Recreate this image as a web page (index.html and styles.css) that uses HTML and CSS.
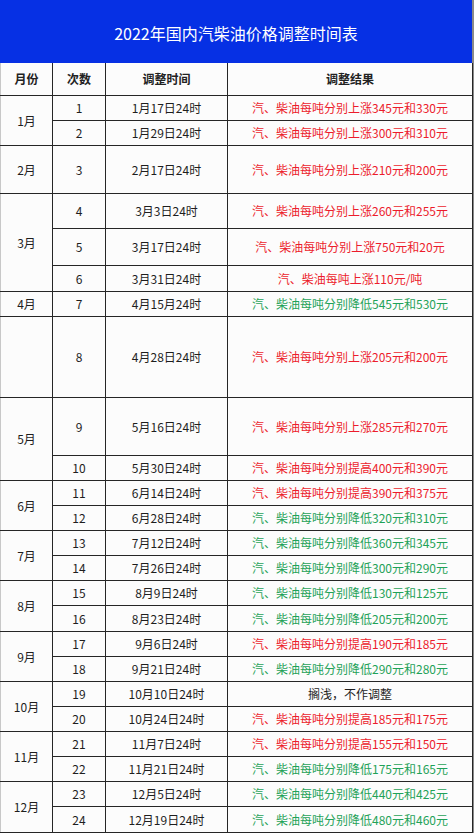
FILE: index.html
```html
<!DOCTYPE html>
<html lang="zh-CN">
<head>
<meta charset="utf-8">
<title>2022年国内汽柴油价格调整时间表</title>
<link rel="stylesheet" href="styles.css">
</head>
<body>
<div class="page">
  <div class="title">2022年国内汽柴油价格调整时间表</div>
  <table class="sheet">
    <colgroup>
      <col class="c-month">
      <col class="c-no">
      <col class="c-time">
      <col class="c-result">
    </colgroup>
    <thead>
      <tr class="h33"><th>月份</th><th>次数</th><th>调整时间</th><th>调整结果</th></tr>
    </thead>
    <tbody>
      <tr><td rowspan="2">1月</td><td>1</td><td>1月17日24时</td><td class="up">汽、柴油每吨分别上涨345元和330元</td></tr>
      <tr><td>2</td><td>1月29日24时</td><td class="up">汽、柴油每吨分别上涨300元和310元</td></tr>
      <tr class="h48"><td>2月</td><td>3</td><td>2月17日24时</td><td class="up">汽、柴油每吨分别上涨210元和200元</td></tr>
      <tr class="h35"><td rowspan="3">3月</td><td>4</td><td>3月3日24时</td><td class="up">汽、柴油每吨分别上涨260元和255元</td></tr>
      <tr class="h37"><td>5</td><td>3月17日24时</td><td class="up">汽、柴油每吨分别上涨750元和20元</td></tr>
      <tr class="h26"><td>6</td><td>3月31日24时</td><td class="up">汽、柴油每吨上涨110元/吨</td></tr>
      <tr><td>4月</td><td>7</td><td>4月15月24时</td><td class="down">汽、柴油每吨分别降低545元和530元</td></tr>
      <tr class="h81"><td></td><td>8</td><td>4月28日24时</td><td class="up">汽、柴油每吨分别上涨205元和200元</td></tr>
      <tr class="h58"><td rowspan="2">5月</td><td>9</td><td>5月16日24时</td><td class="up">汽、柴油每吨分别上涨285元和270元</td></tr>
      <tr><td>10</td><td>5月30日24时</td><td class="up">汽、柴油每吨分别提高400元和390元</td></tr>
      <tr><td rowspan="2">6月</td><td>11</td><td>6月14日24时</td><td class="up">汽、柴油每吨分别提高390元和375元</td></tr>
      <tr><td>12</td><td>6月28日24时</td><td class="down">汽、柴油每吨分别降低320元和310元</td></tr>
      <tr><td rowspan="2">7月</td><td>13</td><td>7月12日24时</td><td class="down">汽、柴油每吨分别降低360元和345元</td></tr>
      <tr><td>14</td><td>7月26日24时</td><td class="down">汽、柴油每吨分别降低300元和290元</td></tr>
      <tr><td rowspan="2">8月</td><td>15</td><td>8月9日24时</td><td class="down">汽、柴油每吨分别降低130元和125元</td></tr>
      <tr class="h26"><td>16</td><td>8月23日24时</td><td class="down">汽、柴油每吨分别降低205元和200元</td></tr>
      <tr><td rowspan="2">9月</td><td>17</td><td>9月6日24时</td><td class="up">汽、柴油每吨分别提高190元和185元</td></tr>
      <tr><td>18</td><td>9月21日24时</td><td class="down">汽、柴油每吨分别降低290元和280元</td></tr>
      <tr><td rowspan="2">10月</td><td>19</td><td>10月10日24时</td><td>搁浅，不作调整</td></tr>
      <tr><td>20</td><td>10月24日24时</td><td class="up">汽、柴油每吨分别提高185元和175元</td></tr>
      <tr><td rowspan="2">11月</td><td>21</td><td>11月7日24时</td><td class="up">汽、柴油每吨分别提高155元和150元</td></tr>
      <tr><td>22</td><td>11月21日24时</td><td class="down">汽、柴油每吨分别降低175元和165元</td></tr>
      <tr><td rowspan="2">12月</td><td>23</td><td>12月5日24时</td><td class="down">汽、柴油每吨分别降低440元和425元</td></tr>
      <tr class="h26"><td>24</td><td>12月19日24时</td><td class="down">汽、柴油每吨分别降低480元和460元</td></tr>
    </tbody>
  </table>
</div>
</body>
</html>
```

FILE: styles.css
```css
html, body {
  margin: 0;
  padding: 0;
  background: #ffffff;
}

body {
  font-family: "Noto Sans CJK SC", "Noto Sans", "Liberation Sans", sans-serif;
  color: #1e1e1e;
  width: 474px;
  height: 833px;
  overflow: hidden;
}

.page {
  width: 472px;
  border-right: 2px solid #8a8a8a;
}

.title {
  height: 63px;
  background: #0630e4;
  color: #ffffff;
  font-size: 16px;
  display: flex;
  align-items: center;
  justify-content: center;
  padding-top: 2px;
  box-sizing: border-box;
}

.sheet {
  width: 472px;
  table-layout: fixed;
  border-collapse: collapse;
  background: #fcfcfc;
}

.c-month { width: 52px; }
.c-no { width: 53px; }
.c-time { width: 122px; }
.c-result { width: 245px; }

.sheet th,
.sheet td {
  border: 1px solid #262626;
  padding: 0;
  height: 24px;
  text-align: center;
  vertical-align: middle;
  font-size: 12px;
  line-height: 14px;
  white-space: nowrap;
  overflow: hidden;
}

.sheet tr > :first-child {
  border-left-color: #c8c8c8;
}

.sheet th {
  font-weight: 700;
  font-size: 12px;
  color: #222;
}

.sheet tr:first-child th {
  border-top: 0;
}

.h26 td { height: 25px; }
.h33 th { height: 32px; }
.h35 td { height: 34px; }
.h37 td { height: 36px; }
.h48 td { height: 47px; }
.h58 td { height: 57px; }
.h81 td { height: 80px; }

.up { color: #ec1c2c; }
.down { color: #1fa258; }
```
